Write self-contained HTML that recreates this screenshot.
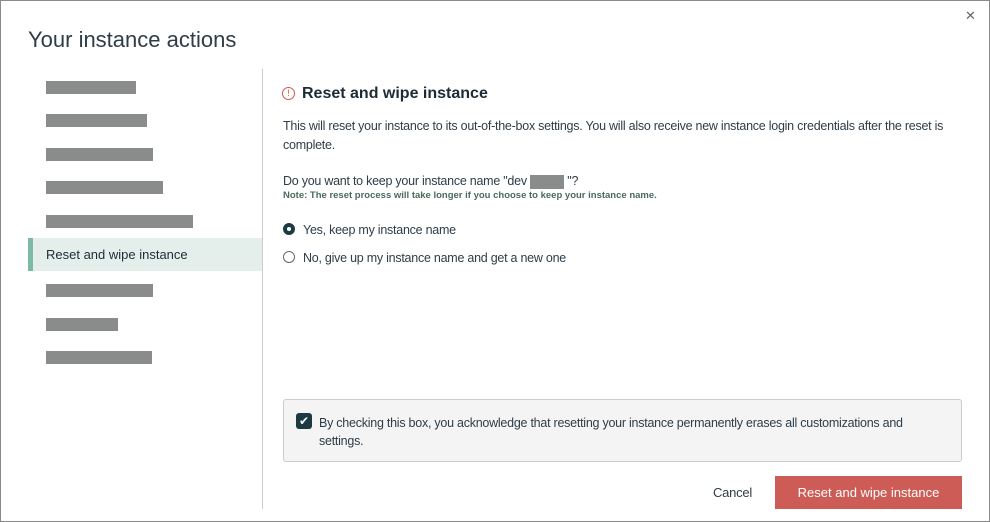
<!DOCTYPE html>
<html><head><style>
*{margin:0;padding:0;box-sizing:border-box}
body{width:990px;height:522px;background:#fff;font-family:"Liberation Sans",sans-serif;color:#1d2b36;position:relative;overflow:hidden}
.frame{position:absolute;left:0;top:0;width:990px;height:522px;border:1px solid #8a8a8a}
.title{position:absolute;left:28px;top:27px;font-size:22px;color:#2e3d48}
.close{position:absolute;left:965px;top:8px;font-size:13px;color:#666}
.bar{position:absolute;left:46px;height:13px;background:#8a8c8c}
.sel{position:absolute;left:28px;top:238px;width:234px;height:33px;background:#e4efec;border-left:5px solid #7dbaa3;font-size:13px;padding:9px 0 0 13px;color:#1d2b36}
.div{position:absolute;left:262px;top:69px;width:1px;height:440px;background:#ccc}
.h{position:absolute;left:302px;top:85px;font-size:16px;font-weight:bold;color:#1d2b36}
.ic{position:absolute;left:282px;top:87px;width:13px;height:13px;border:1.3px solid #d9534f;border-radius:50%;color:#d9534f;font-size:9px;text-align:center;line-height:11px}
.t{position:absolute;left:283px;font-size:12.5px;color:#2e3d48;letter-spacing:-0.25px}
.note{position:absolute;left:283px;top:190px;font-size:9.5px;font-weight:bold;color:#4a6a5a}
.r{position:absolute;left:283px;width:12px;height:12px;border-radius:50%}
.box{position:absolute;left:283px;top:399px;width:679px;height:63px;background:#f4f4f4;border:1px solid #ccc;border-radius:3px}
.cb{position:absolute;left:296px;top:413px;width:16px;height:16px;background:#1d3a40;border-radius:3px;color:#fff;font-size:12px;text-align:center;line-height:16px}
.btn{position:absolute;left:775px;top:476px;width:187px;height:33px;background:#cd5c56;color:#fff;font-size:13px;text-align:center;line-height:33px}
</style></head><body>
<div class="frame"></div>
<div class="title">Your instance actions</div>
<div class="close">✕</div>
<div class="bar" style="top:81px;width:90px"></div>
<div class="bar" style="top:114px;width:101px"></div>
<div class="bar" style="top:148px;width:107px"></div>
<div class="bar" style="top:181px;width:117px"></div>
<div class="bar" style="top:215px;width:147px"></div>
<div class="sel">Reset and wipe instance</div>
<div class="bar" style="top:284px;width:107px"></div>
<div class="bar" style="top:318px;width:72px"></div>
<div class="bar" style="top:351px;width:106px"></div>
<div class="div"></div>
<div class="ic">!</div>
<div class="h">Reset and wipe instance</div>
<div class="t" style="top:117px;line-height:19px;width:680px">This will reset your instance to its out-of-the-box settings. You will also receive new instance login credentials after the reset is complete.</div>
<div class="t" style="top:174px">Do you want to keep your instance name "dev <span style="display:inline-block;width:34px;height:14px;background:#8a8c8c;vertical-align:middle"></span> "?</div>
<div class="note">Note: The reset process will take longer if you choose to keep your instance name.</div>
<div class="r" style="top:223px;border:4px solid #1d3a40"></div>
<div class="t" style="left:303px;top:223px">Yes, keep my instance name</div>
<div class="r" style="top:251px;border:1px solid #666"></div>
<div class="t" style="left:303px;top:251px">No, give up my instance name and get a new one</div>
<div class="box"></div>
<div class="cb">✔</div>
<div class="t" style="left:319px;top:414px;line-height:18px;width:620px">By checking this box, you acknowledge that resetting your instance permanently erases all customizations and settings.</div>
<div class="t" style="left:713px;top:485px;font-size:13px">Cancel</div>
<div class="btn">Reset and wipe instance</div>
</body></html>
